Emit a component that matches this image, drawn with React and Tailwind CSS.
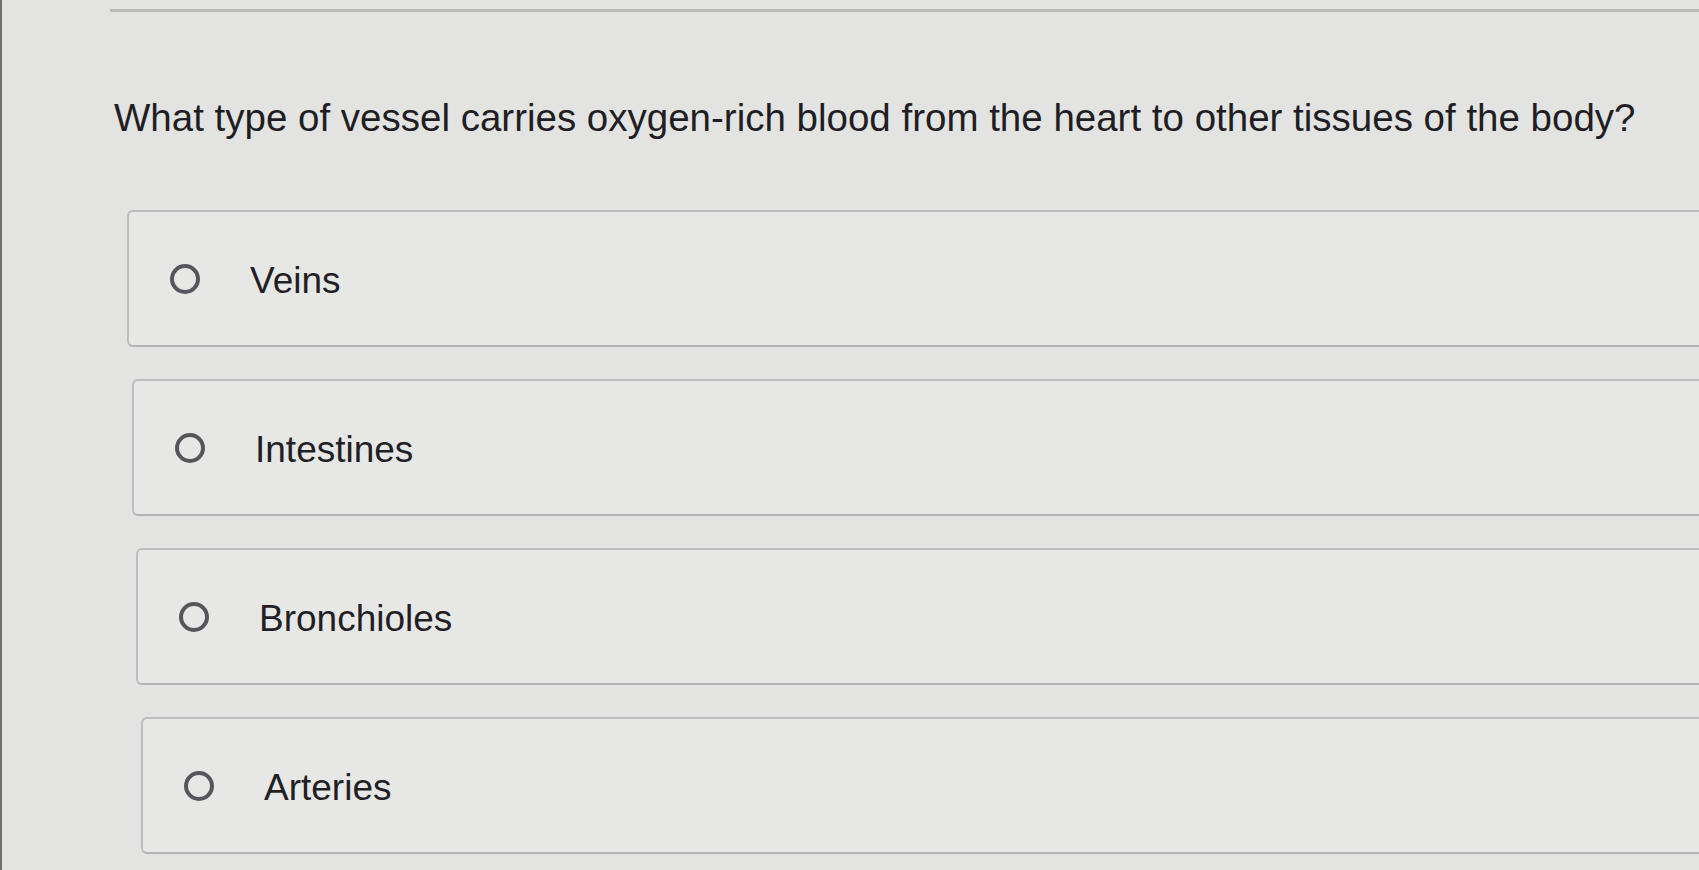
const options = [
  { label: "Veins", indent: "ml-[125px]" },
  { label: "Intestines", indent: "ml-[130px]" },
  { label: "Bronchioles", indent: "ml-[134px]" },
  { label: "Arteries", indent: "ml-[139px]" },
];

function Option({ label, indent }) {
  return (
    <label
      className={`${indent} -mr-10 flex h-[137px] items-center rounded-md border-2 border-[#bbbcbd] border-b-[#b3b4b5] bg-[#e7e8e6] pl-[41px]`}
    >
      <span className="h-[30px] w-[30px] flex-none rounded-full border-[4px] border-[#55555c]" />
      <span className="ml-[50px] pt-[4px] text-[37px] leading-none text-[#1f1f25]">{label}</span>
    </label>
  );
}

export default function App() {
  return (
    <div
      className="h-[870px] overflow-hidden border-l-2 border-[#6d6e6e] bg-[#e3e4e2]"
      style={{ fontFamily: '"Liberation Sans", Arial, sans-serif' }}
    >
      <div className="ml-[108px] mt-[9px] h-[3px] bg-[#b9baba]" />
      <h1 className="ml-[112px] mt-[84px] text-[38.5px] leading-[44px] font-normal whitespace-nowrap text-[#1e1e24]">
        What type of vessel carries oxygen-rich blood from the heart to other tissues of the body?
      </h1>
      <div className="mt-[70px] flex flex-col gap-[32px]">
        {options.map((o) => (
          <Option key={o.label} {...o} />
        ))}
      </div>
    </div>
  );
}
